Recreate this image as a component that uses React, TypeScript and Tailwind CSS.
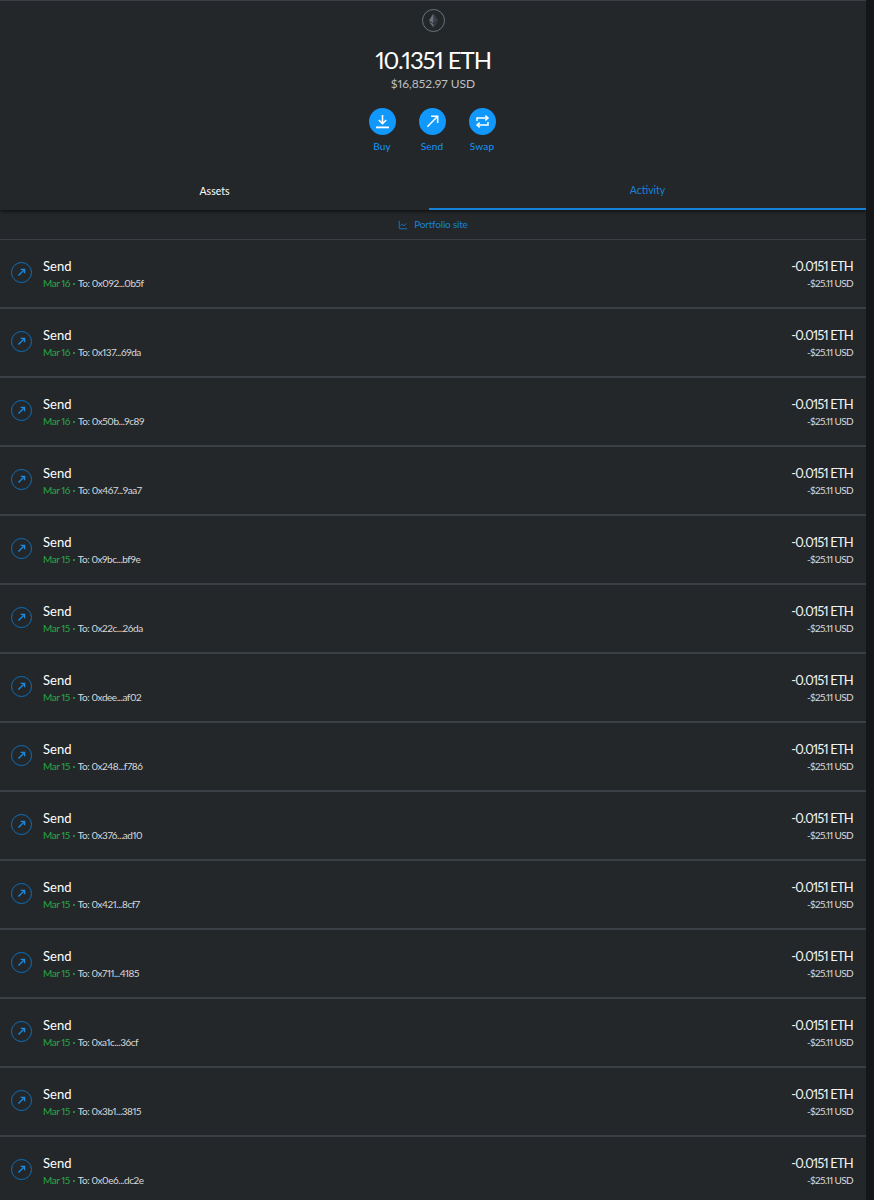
import { ChartLine } from "lucide-react";

type Tx = { date: string; to: string };

const txs: Tx[] = [
  { date: "Mar 16", to: "0x092...0b5f" },
  { date: "Mar 16", to: "0x137...69da" },
  { date: "Mar 16", to: "0x50b...9c89" },
  { date: "Mar 16", to: "0x467...9aa7" },
  { date: "Mar 15", to: "0x9bc...bf9e" },
  { date: "Mar 15", to: "0x22c...26da" },
  { date: "Mar 15", to: "0xdee...af02" },
  { date: "Mar 15", to: "0x248...f786" },
  { date: "Mar 15", to: "0x376...ad10" },
  { date: "Mar 15", to: "0x421...8cf7" },
  { date: "Mar 15", to: "0x711...4185" },
  { date: "Mar 15", to: "0xa1c...36cf" },
  { date: "Mar 15", to: "0x3b1...3815" },
  { date: "Mar 15", to: "0x0e6...dc2e" },
];

function EthMark() {
  return (
    <div className="flex h-[23px] w-[23px] items-center justify-center rounded-full border border-[#6a737d]">
      <svg width="9" height="15" viewBox="0 0 10 16">
        <path d="M5 0 L0 8 L5 11 Z" fill="#6a737d" />
        <path d="M5 0 L10 8 L5 11 Z" fill="#3b4046" />
        <path d="M0 9 L5 16 L5 12 Z" fill="#6a737d" />
        <path d="M10 9 L5 16 L5 12 Z" fill="#3b4046" />
      </svg>
    </div>
  );
}

function SendArrow({ size, width }: { size: number; width: number }) {
  return (
    <svg width={size} height={size} viewBox="0 0 16 16" fill="none" stroke="currentColor" strokeWidth={width}>
      <path d="M2.5 13.5 L13 3" />
      <path d="M6.5 2.5 H13.5 V9.5" />
    </svg>
  );
}

function BuyIcon() {
  return (
    <svg width="15" height="15" viewBox="0 0 15 15" fill="none" stroke="currentColor" strokeWidth="1.6">
      <path d="M7.5 1 V9.5" />
      <path d="M3.8 6 L7.5 9.7 L11.2 6" />
      <path d="M1 13.4 H14" strokeWidth="1.8" />
    </svg>
  );
}

function SwapIcon() {
  return (
    <svg width="15" height="15" viewBox="0 0 15 15" fill="none" stroke="currentColor" strokeWidth="1.5">
      <path d="M2 7 V4 H12.5" />
      <path d="M10.3 1.6 L13 4 L10.3 6.4" />
      <path d="M13 8 V11 H2.5" />
      <path d="M4.7 8.6 L2 11 L4.7 13.4" />
    </svg>
  );
}

function Action({ label, children }: { label: string; children: React.ReactNode }) {
  return (
    <div className="flex w-[27px] flex-col items-center">
      <div className="flex h-[27px] w-[27px] items-center justify-center rounded-full bg-[#1098fc] text-white">
        {children}
      </div>
      <span className="mt-[4px] whitespace-nowrap text-[10px] leading-[14px] tracking-[0.2px] text-[#1098fc]">{label}</span>
    </div>
  );
}

function TxRow({ tx }: { tx: Tx }) {
  return (
    <div className="flex h-[69px] items-center justify-between border-b-2 border-[#3b4046] pl-[11px] pr-[12px]">
      <div className="flex items-center">
        <div className="-mt-[3px] flex h-[21px] w-[21px] items-center justify-center rounded-full border border-[#0f6fb8] text-[#1a8ae0]">
          <SendArrow size={9} width={2.4} />
        </div>
        <div className="ml-[11px]">
          <div className="text-[13px] leading-[18px] text-white">Send</div>
          <div className="mt-[1px] text-[10px] leading-[14px] tracking-[-0.45px]">
            <span className="text-[#28a745]">{tx.date}</span>
            <span className="mx-[3px] inline-block h-[2px] w-[2px] rounded-full bg-[#28a745] align-middle" />
            <span className="text-[#d6d9dc]">To: {tx.to}</span>
          </div>
        </div>
      </div>
      <div className="pr-[1px] text-right">
        <div className="text-[13px] leading-[18px] tracking-[-0.8px] text-[#f2f4f6]">-0.0151 ETH</div>
        <div className="mt-[1px] text-[10px] leading-[14px] tracking-[-0.65px] text-[#d6d9dc]">-$25.11 USD</div>
      </div>
    </div>
  );
}

export default function App() {
  return (
    <div className="h-[1200px] overflow-hidden bg-[#141618] font-['Lato',sans-serif] [font-variant-numeric:proportional-nums]">
      <div className="mr-[8px] h-full overflow-hidden border-t border-[#3b4046] bg-[#24272a]">
        <div className="flex flex-col items-center pt-[8px]">
          <EthMark />
          <div className="mt-[13px] text-[24px] leading-[30px] tracking-[-1.1px] text-white">10.1351 ETH</div>
          <div className="text-[12px] leading-[18px] text-[#bbc0c5]">$16,852.97 USD</div>
          <div className="mt-[15px] flex gap-[23px] pr-[2px]">
            <Action label="Buy"><BuyIcon /></Action>
            <Action label="Send"><SendArrow size={15} width={1.6} /></Action>
            <Action label="Swap"><SwapIcon /></Action>
          </div>
        </div>
        <div className="mt-[10px] flex h-[47px] text-[10.5px] shadow-[0_2px_3px_rgba(0,0,0,0.5)]">
          <div className="flex w-[429px] items-center justify-center pt-[11px] text-white">Assets</div>
          <div className="flex flex-1 items-center justify-center border-b-2 border-[#1583d8] pt-[11px] text-[#1583d8]">Activity</div>
        </div>
        <div className="flex h-[30px] items-center justify-center gap-[6px] border-b border-[#3b4046] text-[10px] tracking-[-0.2px] text-[#1583d8]">
          <ChartLine size={10} />
          <span>Portfolio site</span>
        </div>
        {txs.map((tx) => (
          <TxRow key={tx.to} tx={tx} />
        ))}
      </div>
    </div>
  );
}
